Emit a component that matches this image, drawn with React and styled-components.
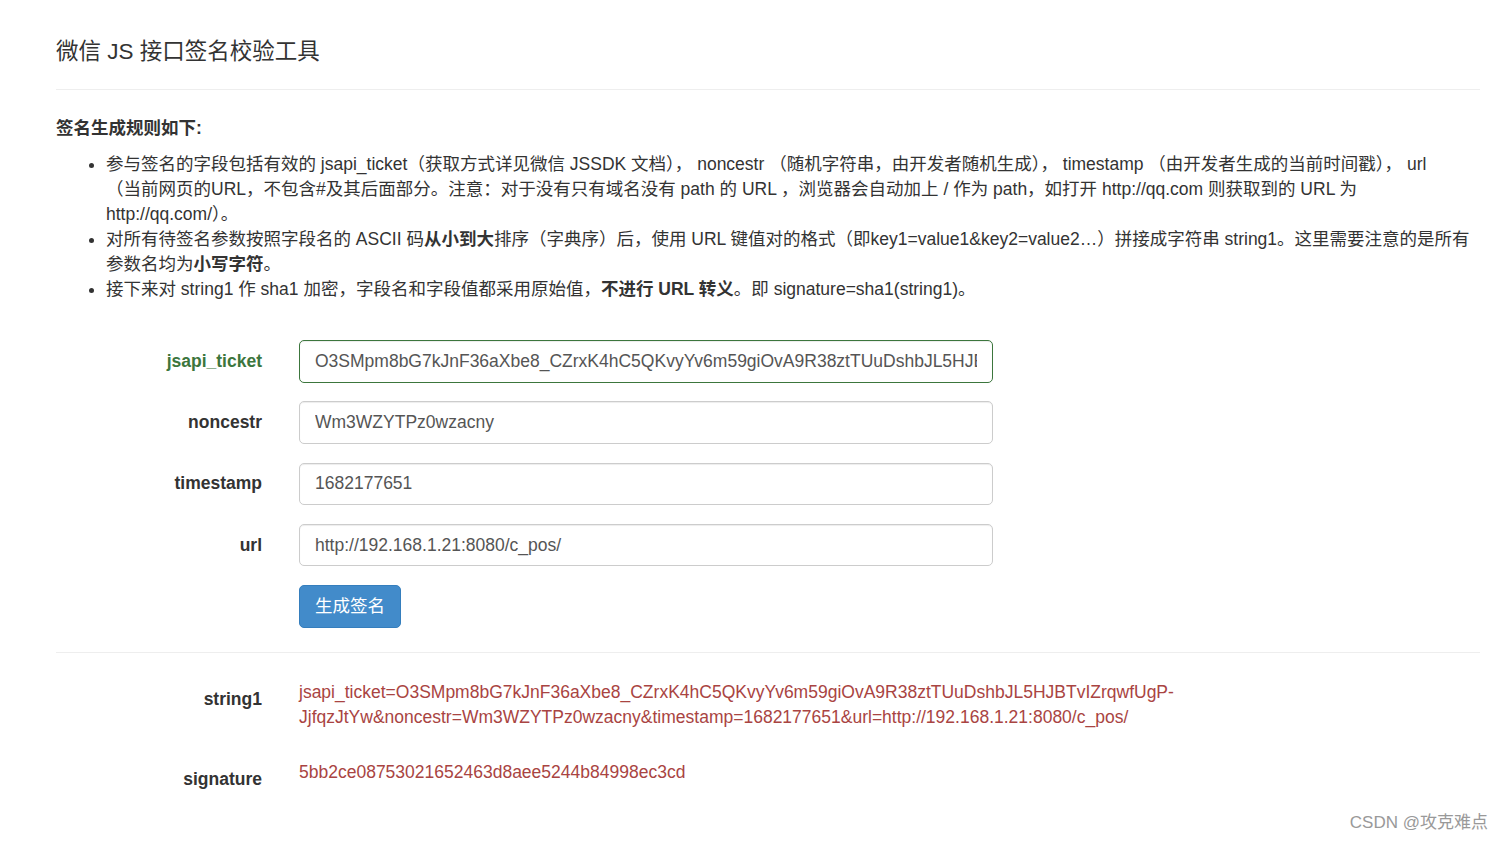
import styled, { createGlobalStyle } from "styled-components";

const GlobalStyle = createGlobalStyle`
  html, body {
    margin: 0;
    padding: 0;
    background: #fff;
  }
  body {
    font-family: "Liberation Sans", "Noto Sans CJK SC", sans-serif;
    font-size: 17.5px;
    line-height: 25px;
    color: #333;
  }
  * {
    box-sizing: border-box;
  }
`;

const ticket =
  "O3SMpm8bG7kJnF36aXbe8_CZrxK4hC5QKvyYv6m59giOvA9R38ztTUuDshbJL5HJBTvIZrqwfUgP-JjfqzJtYw";

const fields = [
  { name: "jsapi_ticket", value: ticket, success: true },
  { name: "noncestr", value: "Wm3WZYTPz0wzacny" },
  { name: "timestamp", value: "1682177651" },
  { name: "url", value: "http://192.168.1.21:8080/c_pos/" },
];

const App = () => {
  const string1 = `jsapi_ticket=${ticket}&noncestr=Wm3WZYTPz0wzacny&timestamp=1682177651&url=http://192.168.1.21:8080/c_pos/`;

  return (
    <Page>
      <GlobalStyle />
      <Title>微信 JS 接口签名校验工具</Title>
      <Divider $top="24px" $bottom="26px" />

      <RulesTitle>签名生成规则如下:</RulesTitle>
      <Rules>
        <li>
          参与签名的字段包括有效的 jsapi_ticket（获取方式详见微信 JSSDK 文档）， noncestr
          （随机字符串，由开发者随机生成）， timestamp （由开发者生成的当前时间戳）， url
          <br />
          （当前网页的URL，不包含#及其后面部分。注意：对于没有只有域名没有 path 的 URL
          ，浏览器会自动加上 / 作为 path，如打开 http://qq.com 则获取到的 URL 为
          <br />
          http://qq.com/）。
        </li>
        <li>
          对所有待签名参数按照字段名的 ASCII 码<b>从小到大</b>排序（字典序）后，使用 URL
          键值对的格式（即key1=value1&key2=value2…）拼接成字符串
          string1。这里需要注意的是所有参数名均为<b>小写字符</b>。
        </li>
        <li>
          接下来对 string1 作 sha1 加密，字段名和字段值都采用原始值，<b>不进行 URL 转义</b>。即
          signature=sha1(string1)。
        </li>
      </Rules>

      <Form>
        {fields.map((f) => (
          <FormRow key={f.name}>
            <Label $success={f.success}>{f.name}</Label>
            <Input defaultValue={f.value} $success={f.success} readOnly />
          </FormRow>
        ))}
        <FormRow>
          <span />
          <div>
            <Button type="button">生成签名</Button>
          </div>
        </FormRow>
      </Form>

      <Divider $top="24px" $bottom="27px" />

      <ResultRow>
        <ResultLabel>string1</ResultLabel>
        <ResultValue>{string1}</ResultValue>
      </ResultRow>
      <ResultRow>
        <ResultLabel>signature</ResultLabel>
        <ResultValue>5bb2ce08753021652463d8aee5244b84998ec3cd</ResultValue>
      </ResultRow>

      <Watermark>CSDN @攻克难点</Watermark>
    </Page>
  );
};

const Page = styled.div`
  position: relative;
  min-height: 841px;
  padding: 39px 24px 0 56px;
`;

const Title = styled.h3`
  margin: 0;
  font-size: 22.5px;
  line-height: 26px;
  font-weight: 400;
  color: #333;
`;

const Divider = styled.hr`
  margin: ${({ $top }) => $top || "26px"} 0 ${({ $bottom }) => $bottom || "24px"};
  border: 0;
  border-top: 1px solid #eee;
`;

const RulesTitle = styled.div`
  font-weight: 700;
  line-height: 25px;
`;

const Rules = styled.ul`
  margin: 11px 0 0;
  padding-left: 50px;

  li {
    line-height: 25px;
  }

  b {
    font-weight: 700;
  }
`;

const Form = styled.div`
  margin-top: 38px;
  display: flex;
  flex-direction: column;
  gap: 18.75px;
`;

const FormRow = styled.div`
  display: grid;
  grid-template-columns: 206px 694px;
  column-gap: 37px;
  align-items: center;
`;

const Label = styled.label`
  text-align: right;
  font-weight: 700;
  color: ${({ $success }) => ($success ? "#3c763d" : "#333")};
`;

const Input = styled.input`
  display: block;
  width: 100%;
  height: 42.5px;
  padding: 7.5px 15px;
  font-family: "Liberation Sans", "Noto Sans CJK SC", sans-serif;
  font-size: 17.5px;
  color: #555;
  background: #fff;
  border: 1.25px solid ${({ $success }) => ($success ? "#3c763d" : "#ccc")};
  border-radius: 5px;
  box-shadow: inset 0 1px 1px rgba(0, 0, 0, 0.075);
  outline: none;
`;

const Button = styled.button`
  height: 42.5px;
  padding: 7.5px 15px;
  font-family: "Liberation Sans", "Noto Sans CJK SC", sans-serif;
  font-size: 17.5px;
  line-height: 25px;
  color: #fff;
  background: #428bca;
  border: 1.25px solid #357ebd;
  border-radius: 5px;
  cursor: pointer;
`;

const ResultRow = styled.div`
  display: grid;
  grid-template-columns: 206px 937px;
  column-gap: 37px;
  margin-bottom: 30px;
`;

const ResultLabel = styled.div`
  text-align: right;
  font-weight: 700;
  padding-top: 7px;
`;

const ResultValue = styled.div`
  color: #a94442;
  line-height: 25px;
`;

const Watermark = styled.div`
  position: absolute;
  right: 16px;
  top: 811px;
  font-size: 17px;
  line-height: 24px;
  color: #999;
`;

export default App;
